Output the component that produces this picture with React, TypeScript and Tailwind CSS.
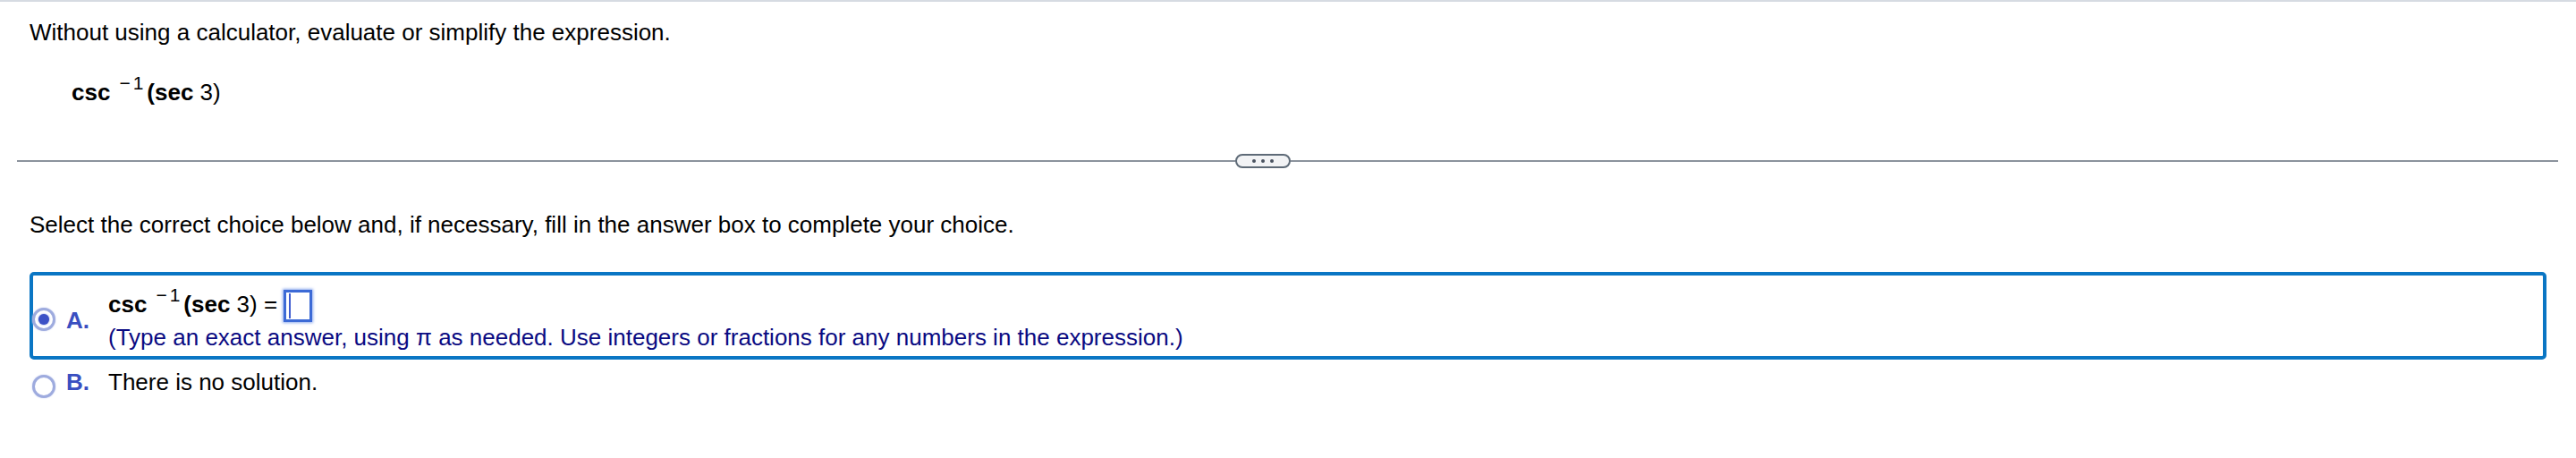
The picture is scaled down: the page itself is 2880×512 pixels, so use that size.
import React from 'react';

const Radio: React.FC<{ checked?: boolean }> = ({ checked }) => (
  <span className="flex h-[26px] w-[26px] shrink-0 items-center justify-center rounded-full border-[3px] border-[#9eabde] bg-white shadow-[0_0_2px_#c4cdf0]">
    {checked && <span className="h-[12px] w-[12px] rounded-full bg-[#3d52c6] shadow-[0_0_2px_#6b7dd8]" />}
  </span>
);

const Expr: React.FC = () => (
  <>
    <span className="font-bold">csc</span>
    <span className="relative -top-[12px] ml-[10px] text-[21px]">
      −<span className="ml-[3px]">1</span>
    </span>
    <span className="ml-[4px] font-bold">(sec</span> 3)
  </>
);

const App: React.FC = () => {
  return (
    <div className="h-[512px] w-full border-t-2 border-[#d6dbe2] bg-white pl-[19px] pr-[20px] pt-[19px] font-['Liberation_Sans',Arial,sans-serif] text-[26px] leading-[30px] text-black">
      <div className="pl-[14px]">Without using a calculator, evaluate or simplify the expression.</div>
      <div className="mt-[37px] pl-[61px]">
        <Expr />
      </div>

      <div className="mt-[52px] flex h-[16px] items-center">
        <div className="h-[2px] w-[1362px] bg-[#8b939d]" />
        <div className="flex h-[16px] w-[62px] items-center justify-center gap-[6px] rounded-full border-2 border-[#5e6a77] bg-[#f2f3f5]">
          <span className="h-[4px] w-[4px] rounded-full bg-[#4a5360]" />
          <span className="h-[4px] w-[4px] rounded-full bg-[#4a5360]" />
          <span className="h-[4px] w-[4px] rounded-full bg-[#4a5360]" />
        </div>
        <div className="h-[2px] flex-1 bg-[#8b939d]" />
      </div>

      <div className="mt-[48px] pl-[14px]">
        Select the correct choice below and, if necessary, fill in the answer box to complete your choice.
      </div>

      <div className="ml-[14px] mr-[13px] mt-[38px] flex h-[98px] items-start rounded-[5px] border-4 border-[#0a76c4]">
        <div className="relative -ml-[1px] mt-[36px]">
          <Radio checked />
        </div>
        <div className="ml-[12px] mt-[35px] w-[47px] font-bold text-[#3a4fc1]">A.</div>
        <div className="flex flex-col pt-[16px]">
          <div>
            <Expr /> ={' '}
            <span className="inline-flex h-[36px] w-[32px] items-center border-[3px] border-[#3c6ad6] align-middle shadow-[0_0_3px_1px_#8eaaee]">
              <span className="ml-[3px] h-[28px] w-[2px] bg-[#3d5bd0]" />
            </span>
          </div>
          <div className="mt-[2px] text-[#0a0a82]">
            (Type an exact answer, using π as needed. Use integers or fractions for any numbers in the expression.)
          </div>
        </div>
      </div>

      <div className="ml-[14px] mt-[10px] flex items-start">
        <div className="ml-[3px] mt-[7px]">
          <Radio />
        </div>
        <div className="ml-[12px] w-[47px] font-bold text-[#3a4fc1]">B.</div>
        <div>There is no solution.</div>
      </div>
    </div>
  );
};

export default App;
